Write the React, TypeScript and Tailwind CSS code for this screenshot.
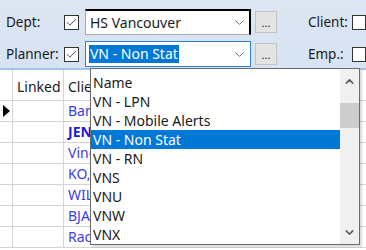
import { Check, ChevronDown, ChevronUp } from 'lucide-react';

const clients = [
  { name: 'Barnes, Alice', bold: false },
  { name: 'JENKINS, MARY', bold: true },
  { name: 'Vincent, Paul', bold: false },
  { name: 'KO, Daniel', bold: false },
  { name: 'WILSON, JOHN', bold: false },
  { name: 'BJARNASON, ERIC', bold: false },
  { name: 'Rachel, Lee', bold: false },
];

const planners = [
  'VN - LPN',
  'VN - Mobile Alerts',
  'VN - Non Stat',
  'VN - RN',
  'VNS',
  'VNU',
  'VNW',
  'VNX',
];

function CheckBox({ checked }: { checked: boolean }) {
  return (
    <div className="w-[15px] h-[15px] border border-[#333333] bg-white flex items-center justify-center">
      {checked && <Check size={13} strokeWidth={1.6} className="text-[#333333]" />}
    </div>
  );
}

function Combo({ value, focused }: { value: string; focused: boolean }) {
  return (
    <div
      className={
        focused
          ? 'w-[166px] h-[26px] border border-[#2f7fd8] bg-white flex items-center pl-[3px] pr-[3px]'
          : 'w-[166px] h-[26px] border border-[#a8a8a8] border-t-2 border-t-black border-r-2 border-r-black bg-white flex items-center pl-[3px] pr-[2px]'
      }
    >
      <span
        className={
          focused
            ? 'bg-[#0078d7] text-white px-[1px] leading-[18px]'
            : 'text-[#1a1a1a] px-[1px] leading-[18px]'
        }
      >
        {value}
      </span>
      <ChevronDown size={15} strokeWidth={1.4} className="ml-auto text-[#555555]" />
    </div>
  );
}

function DotsButton() {
  return (
    <div className="w-[22px] h-[22px] border border-[#c4c4c4] bg-[#e3e3e3] flex items-end justify-center pb-[4px] text-[11px] leading-none text-[#222222]">
      ...
    </div>
  );
}

export default function App() {
  return (
    <div className="relative w-[366px] h-[250px] overflow-hidden bg-white font-['Noto_Sans',sans-serif] text-[14px] text-[#1a1a1a]">
      {/* filter panel */}
      <div className="h-[70px] bg-gradient-to-b from-[#dde6f3] to-[#d7e3f3] border-b-2 border-[#a9c0e2] flex flex-col pt-[9px] gap-[6px]">
        <div className="flex items-center h-[26px]">
          <span className="w-[67px] pl-[6px] text-[13.5px]">Dept:</span>
          <CheckBox checked />
          <div className="ml-[6px]">
            <Combo value="HS Vancouver" focused={false} />
          </div>
          <div className="ml-[4px]">
            <DotsButton />
          </div>
          <span className="ml-[31px] w-[46px] text-[13.5px]">Client:</span>
          <CheckBox checked={false} />
        </div>
        <div className="flex items-center h-[26px]">
          <span className="w-[67px] pl-[6px] text-[13.5px]">Planner:</span>
          <CheckBox checked />
          <div className="ml-[6px]">
            <Combo value="VN - Non Stat" focused />
          </div>
          <div className="ml-[4px]">
            <DotsButton />
          </div>
          <span className="ml-[31px] w-[46px] text-[13.5px]">Emp.:</span>
          <CheckBox checked={false} />
        </div>
      </div>

      {/* grid */}
      <div className="flex flex-col">
        <div className="flex h-[31px] border-b border-[#d4d4d4]">
          <div className="w-[13px] border-r border-[#d4d4d4]" />
          <div className="w-[51px] border-r border-[#d4d4d4] pl-[4px] pt-[6px]">Linked</div>
          <div className="flex-1 pl-[4px] pt-[6px]">Client</div>
        </div>
        {clients.map((c, i) => (
          <div key={c.name} className="flex h-[21px] border-b border-[#d4d4d4]">
            <div className="w-[13px] border-r border-[#d4d4d4] flex items-center pl-[3px]">
              {i === 0 && (
                <svg width="7" height="12" viewBox="0 0 7 12">
                  <path d="M0 0 L7 6 L0 12 Z" fill="#000000" />
                </svg>
              )}
            </div>
            <div className="w-[51px] border-r border-[#d4d4d4]" />
            <div className="w-[26px] overflow-hidden">
              <div
                className={
                  c.bold
                    ? 'pl-[4px] leading-[20px] font-bold text-[#1c1cd0] whitespace-nowrap'
                    : 'pl-[4px] leading-[20px] text-[#3d3de0] whitespace-nowrap'
                }
              >
                {c.name}
              </div>
            </div>
          </div>
        ))}
      </div>

      {/* open dropdown list */}
      <div className="absolute left-[90px] top-[68px] w-[270px] h-[177px] bg-white border border-[#6b6b6b] flex shadow-[2px_2px_2px_rgba(0,0,0,0.15)]">
        <div className="flex-1 flex flex-col pt-[4px]">
          <div className="h-[19px] leading-[19px] pl-[2px]">Name</div>
          {planners.map((p) => (
            <div
              key={p}
              className={
                p === 'VN - Non Stat'
                  ? 'h-[19px] leading-[19px] pl-[2px] bg-[#0078d7] text-white'
                  : 'h-[19px] leading-[19px] pl-[2px]'
              }
            >
              {p}
            </div>
          ))}
        </div>
        <div className="w-[19px] bg-[#f0f0f0] flex flex-col items-center">
          <div className="h-[19px] flex items-center justify-center mt-[3px]">
            <ChevronUp size={13} strokeWidth={3} className="text-[#606060]" />
          </div>
          <div className="w-full h-[25px] bg-[#cdcdcd] mt-[12px]" />
          <div className="mt-auto h-[19px] flex items-center justify-center mb-[2px]">
            <ChevronDown size={13} strokeWidth={3} className="text-[#606060]" />
          </div>
        </div>
      </div>
    </div>
  );
}
